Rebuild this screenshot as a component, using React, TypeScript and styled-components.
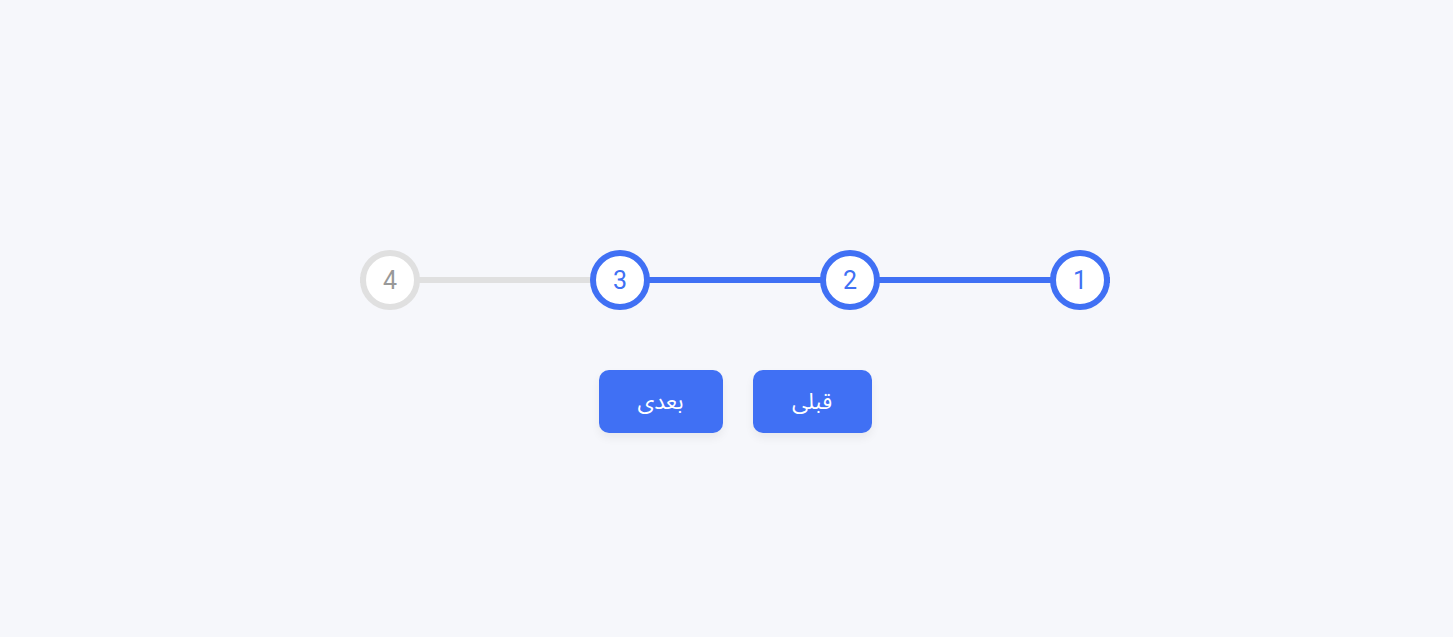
import styled, { createGlobalStyle } from 'styled-components';

const GlobalStyle = createGlobalStyle`
  html, body {
    margin: 0;
    padding: 0;
    background: #f6f7fb;
    font-family: Roboto, "DejaVu Sans", sans-serif;
  }
`;

const Page = styled.div`
  direction: rtl;
  min-height: 637px;
  display: flex;
  flex-direction: column;
  align-items: center;
  padding: 250px 0 0 17px;
  box-sizing: border-box;
`;

const Steps = styled.div`
  position: relative;
  display: flex;
  justify-content: space-between;
  align-items: center;
  width: 750px;
`;

const Track = styled.div`
  position: absolute;
  right: 0;
  left: 0;
  top: 50%;
  height: 6px;
  margin-top: -3px;
  background: #e0e0e0;
`;

const Fill = styled.div`
  position: absolute;
  right: 0;
  top: 0;
  bottom: 0;
  background: #4070f4;
`;

const Step = styled.span<{ $active: boolean }>`
  position: relative;
  z-index: 1;
  width: 60px;
  height: 60px;
  box-sizing: border-box;
  border-radius: 50%;
  background: #fff;
  border: 6px solid ${(p) => (p.$active ? '#4070f4' : '#e0e0e0')};
  color: ${(p) => (p.$active ? '#4070f4' : '#999')};
  font-family: Roboto, sans-serif;
  font-size: 25px;
  display: flex;
  align-items: center;
  justify-content: center;
`;

const Buttons = styled.div`
  display: flex;
  gap: 30px;
  margin-top: 60px;
`;

const Button = styled.button<{ $w: number }>`
  width: ${(p) => p.$w}px;
  height: 63px;
  border: none;
  border-radius: 10px;
  background: #4070f4;
  color: #fff;
  font-family: "Noto Sans Arabic", "Noto Naskh Arabic", sans-serif;
  font-size: 22px;
  box-shadow: 0 5px 10px rgba(0, 0, 0, 0.06);
  cursor: pointer;
`;

const steps = [1, 2, 3, 4];
const current = 3;

export default function App() {
  const pct = ((current - 1) / (steps.length - 1)) * 100;
  return (
    <Page>
      <GlobalStyle />
      <Steps>
        <Track>
          <Fill style={{ width: `${pct}%` }} />
        </Track>
        {steps.map((n) => (
          <Step key={n} $active={n <= current}>
            {n}
          </Step>
        ))}
      </Steps>
      <Buttons>
        <Button $w={119}>قبلی</Button>
        <Button $w={124}>بعدی</Button>
      </Buttons>
    </Page>
  );
}
